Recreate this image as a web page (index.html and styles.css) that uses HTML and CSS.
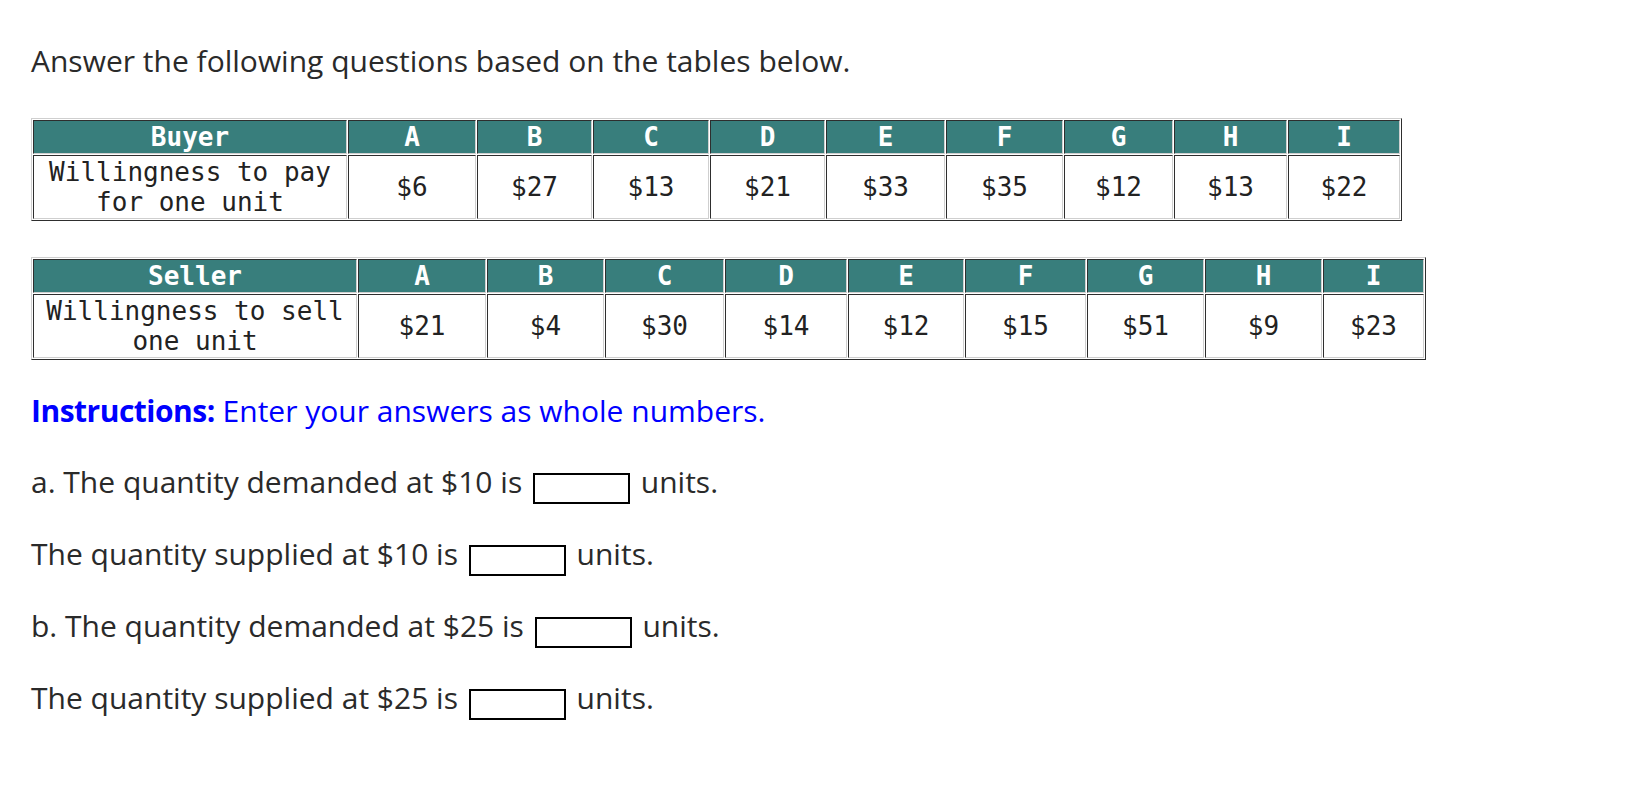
FILE: index.html
```html
<!DOCTYPE html>
<html>
<head>
<meta charset="utf-8">
<title>Willingness to pay and sell</title>
<link rel="stylesheet" href="styles.css">
</head>
<body>
<div class="page">
  <p class="intro">Answer the following questions based on the tables below.</p>

  <table class="wtp buyers">
    <tr class="head">
      <th class="label">Buyer</th>
      <th class="c-a">A</th><th class="c-b">B</th><th class="c-c">C</th><th class="c-d">D</th><th class="c-e">E</th><th class="c-f">F</th><th class="c-g">G</th><th class="c-h">H</th><th class="c-i">I</th>
    </tr>
    <tr>
      <td>Willingness to pay for one unit</td>
      <td>$6</td><td>$27</td><td>$13</td><td>$21</td><td>$33</td><td>$35</td><td>$12</td><td>$13</td><td>$22</td>
    </tr>
  </table>

  <table class="wtp sellers">
    <tr class="head">
      <th class="label">Seller</th>
      <th class="c-a">A</th><th class="c-b">B</th><th class="c-c">C</th><th class="c-d">D</th><th class="c-e">E</th><th class="c-f">F</th><th class="c-g">G</th><th class="c-h">H</th><th class="c-i">I</th>
    </tr>
    <tr>
      <td>Willingness to sell one unit</td>
      <td>$21</td><td>$4</td><td>$30</td><td>$14</td><td>$12</td><td>$15</td><td>$51</td><td>$9</td><td>$23</td>
    </tr>
  </table>

  <p class="instructions"><strong>Instructions:</strong> Enter your answers as whole numbers.</p>

  <div class="questions">
    <div class="q">a. The quantity demanded at $10 is <span class="box"></span> units.</div>
    <div class="q">The quantity supplied at $10 is <span class="box"></span> units.</div>
    <div class="q">b. The quantity demanded at $25 is <span class="box"></span> units.</div>
    <div class="q">The quantity supplied at $25 is <span class="box"></span> units.</div>
  </div>
</div>
</body>
</html>
```

FILE: styles.css
```css
html, body {
  margin: 0;
  padding: 0;
  background: #fff;
}

.page {
  padding: 43px 0 0 31px;
  font-family: "Open Sans", Lato, sans-serif;
  font-size: 30px;
  color: #2a2a2a;
}

.intro {
  margin: 0;
  line-height: 36px;
}

.wtp {
  border-collapse: separate;
  border-spacing: 1px;
  border: 1px solid;
  border-color: #cfcfcf #2e2e2e #2e2e2e #cfcfcf;
  font-family: "DejaVu Sans Mono", monospace;
  font-size: 26px;
  line-height: 30px;
  color: #222;
}

.buyers {
  margin-top: 39px;
}

.sellers {
  margin-top: 36px;
}

.wtp th,
.wtp td {
  box-sizing: border-box;
  padding: 1px;
  border: 1px solid;
  border-color: #2e2e2e #cfcfcf #cfcfcf #2e2e2e;
  text-align: center;
  vertical-align: middle;
}

.wtp th {
  background: #387e7c;
  color: #fff;
  font-weight: bold;
}

.wtp td {
  height: 64px;
}

.sellers td {
  height: 61px;
}

.buyers .label { width: 314px; }
.buyers .c-a { width: 128px; }
.buyers .c-b { width: 115px; }
.buyers .c-c { width: 116px; }
.buyers .c-d { width: 115px; }
.buyers .c-e { width: 119px; }
.buyers .c-f { width: 117px; }
.buyers .c-g { width: 109px; }
.buyers .c-h { width: 113px; }
.buyers .c-i { width: 112px; }

.sellers .label { width: 324px; }
.sellers .c-a { width: 128px; }
.sellers .c-b { width: 117px; }
.sellers .c-c { width: 119px; }
.sellers .c-d { width: 122px; }
.sellers .c-e { width: 116px; }
.sellers .c-f { width: 121px; }
.sellers .c-g { width: 117px; }
.sellers .c-h { width: 117px; }
.sellers .c-i { width: 101px; }

.instructions {
  margin: 33px 0 0;
  line-height: 36px;
  color: #0000ff;
}

.instructions strong {
  font-weight: 700;
  letter-spacing: -0.5px;
}

.questions {
  margin-top: 31px;
  display: flex;
  flex-direction: column;
  gap: 28px;
}

.q {
  line-height: 44px;
}

.box {
  display: inline-block;
  box-sizing: border-box;
  width: 97px;
  height: 31px;
  border: 2px solid #000;
  vertical-align: -11px;
  margin: 0 3px;
}
```
